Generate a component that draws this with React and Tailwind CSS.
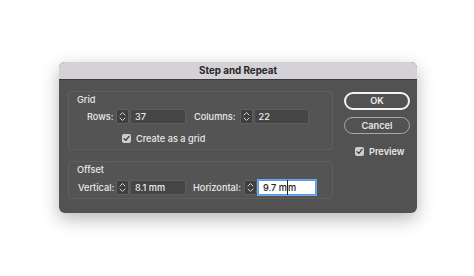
import React from "react";

function Stepper() {
  return (
    <div className="w-[13px] h-full bg-[#3f3f3f] border border-[#5f5f5f] rounded-[2px] flex items-center justify-center">
      <svg width="7" height="11" viewBox="0 0 7 11" fill="none" stroke="#cfcfcf" strokeWidth="1" strokeLinecap="round" strokeLinejoin="round">
        <path d="M1 4 L3.5 1.5 L6 4" />
        <path d="M1 7 L3.5 9.5 L6 7" />
      </svg>
    </div>
  );
}

function Field({ value, w }) {
  return (
    <div className="flex h-[15px] gap-[1px]">
      <Stepper />
      <div className={`${w} h-full bg-[#454545] border border-[#5c5c5c] text-[#ececec] pl-[4px] leading-[13px]`}>{value}</div>
    </div>
  );
}

function Check() {
  return (
    <div className="w-[9px] h-[9px] bg-[#cdcdcd] rounded-[2px] flex items-center justify-center">
      <svg width="7" height="7" viewBox="0 0 7 7" fill="none" stroke="#3a3a3a" strokeWidth="1.3" strokeLinecap="round" strokeLinejoin="round">
        <path d="M1 3.6 L2.8 5.4 L6 1.4" />
      </svg>
    </div>
  );
}

export default function App() {
  return (
    <div className="w-[474px] h-[276px] bg-white pt-[62px] pl-[59px]" style={{ fontFamily: "Inter, 'Noto Sans', sans-serif" }}>
      <div className="w-[358px] h-[151px] rounded-[6px] bg-[#525252] overflow-hidden flex flex-col shadow-[0_6px_18px_rgba(0,0,0,0.28)] text-[9.2px] font-medium text-[#e8e8e8]">
        <div className="h-[18px] bg-[#d4d1d7] text-center font-bold text-[9.8px] leading-[17px] text-[#262626] border-b border-[#3a3a3a]">
          Step and Repeat
        </div>
        <div className="flex pl-[9px] pt-[11px]">
          <div className="flex flex-col w-[265px] gap-[11px]">
            <div className="h-[59px] border border-[#5e5e5e] bg-[#545454] rounded-[2px] flex flex-col">
              <div className="h-[14px] leading-[14px] mt-[1px] pl-[8px]">Grid</div>
              <div className="flex items-center mt-[2px] pl-[18px]">
                <span className="w-[26px] text-right">Rows:</span>
                <div className="ml-[3px]"><Field value="37" w="w-[56px]" /></div>
                <span className="ml-[8px]">Columns:</span>
                <div className="ml-[4px]"><Field value="22" w="w-[55px]" /></div>
              </div>
              <div className="flex items-center h-[13px] mt-[8px] pl-[53px] gap-[5px]">
                <Check />
                <span>Create as a grid</span>
              </div>
            </div>
            <div className="h-[38px] border border-[#5e5e5e] bg-[#545454] rounded-[2px] flex flex-col">
              <div className="h-[14px] leading-[14px] mt-[1px] pl-[8px]">Offset</div>
              <div className="flex items-center mt-[3px] pl-[9px]">
                <span className="w-[35px] text-right">Vertical:</span>
                <div className="ml-[3px]"><Field value="8.1 mm" w="w-[56px]" /></div>
                <span className="ml-[7px]">Horizontal:</span>
                <div className="ml-[3px] flex h-[15px] gap-[1px]">
                  <Stepper />
                  <div className="w-[58px] h-full bg-white border border-[#5a9ae6] ring-1 ring-[#6ea6ea] text-[#222] pl-[4px] leading-[13px] flex">
                    <span>9.7 m</span>
                    <span className="w-[1px] h-[15px] -mt-[1px] bg-[#222]"></span>
                    <span>m</span>
                  </div>
                </div>
              </div>
            </div>
          </div>
          <div className="ml-[11px] mt-[1px] flex flex-col w-[66px]">
            <div className="h-[18px] rounded-full border-2 border-[#f2f2f2] flex items-center justify-center font-semibold text-[#eeeeee]">OK</div>
            <div className="h-[17px] mt-[7px] rounded-full border-[1.5px] border-[#a8a8a8] flex items-center justify-center font-semibold text-[#e6e6e6]">Cancel</div>
            <div className="flex items-center mt-[11px] pl-[11px] gap-[5px]">
              <Check />
              <span className="font-semibold">Preview</span>
            </div>
          </div>
        </div>
      </div>
    </div>
  );
}
